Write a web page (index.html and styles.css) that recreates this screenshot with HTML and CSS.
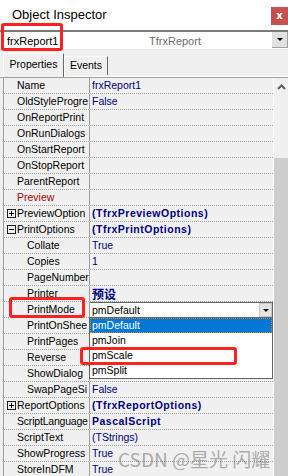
FILE: index.html
```html
<!DOCTYPE html>
<html lang="en">
<head>
  <meta charset="utf-8">
  <title>Object Inspector</title>
  <link rel="stylesheet" href="styles.css">
</head>
<body>
  <div class="inspector">
    <div class="titlebar">
      <span class="title">Object Inspector</span>
      <span class="close">x</span>
    </div>

    <div class="combo">
      <span class="combo-name">frxReport1</span>
      <span class="combo-class">TfrxReport</span>
      <span class="combo-btn"><span class="tri"></span></span>
    </div>

    <div class="tabs">
      <span class="tab active">Properties</span>
      <span class="tab">Events</span>
    </div>

    <div class="content">
      <div class="grid">
        <div class="row"><span class="name">Name</span><span class="value">frxReport1</span></div>
        <div class="row"><span class="name">OldStyleProgre</span><span class="value">False</span></div>
        <div class="row"><span class="name">OnReportPrint</span><span class="value"></span></div>
        <div class="row"><span class="name">OnRunDialogs</span><span class="value"></span></div>
        <div class="row"><span class="name">OnStartReport</span><span class="value"></span></div>
        <div class="row"><span class="name">OnStopReport</span><span class="value"></span></div>
        <div class="row"><span class="name">ParentReport</span><span class="value"></span></div>
        <div class="row"><span class="name red">Preview</span><span class="value"></span></div>
        <div class="row">
          <span class="name group">
            <svg class="toggle" width="9" height="9" viewBox="0 0 9 9"><rect x="0.5" y="0.5" width="8" height="8" fill="none" stroke="#222"/><path d="M2 4.5h5M4.5 2v5" stroke="#000"/></svg>PreviewOption
          </span>
          <span class="value bold">(TfrxPreviewOptions)</span>
        </div>
        <div class="row">
          <span class="name group">
            <svg class="toggle" width="9" height="9" viewBox="0 0 9 9"><rect x="0.5" y="0.5" width="8" height="8" fill="none" stroke="#222"/><path d="M2 4.5h5" stroke="#000"/></svg>PrintOptions
          </span>
          <span class="value bold">(TfrxPrintOptions)</span>
        </div>
        <div class="row"><span class="name sub">Collate</span><span class="value">True</span></div>
        <div class="row"><span class="name sub">Copies</span><span class="value">1</span></div>
        <div class="row"><span class="name sub">PageNumber</span><span class="value"></span></div>
        <div class="row"><span class="name sub">Printer</span><span class="value bold cjk">预设</span></div>
        <div class="row">
          <span class="name sub">PrintMode</span>
          <span class="value editor">pmDefault<span class="edit-btn"><span class="tri"></span></span></span>
        </div>
        <div class="row"><span class="name sub">PrintOnShee</span><span class="value"></span></div>
        <div class="row"><span class="name sub">PrintPages</span><span class="value"></span></div>
        <div class="row"><span class="name sub">Reverse</span><span class="value"></span></div>
        <div class="row"><span class="name sub">ShowDialog</span><span class="value"></span></div>
        <div class="row"><span class="name sub">SwapPageSi</span><span class="value">False</span></div>
        <div class="row">
          <span class="name group">
            <svg class="toggle" width="9" height="9" viewBox="0 0 9 9"><rect x="0.5" y="0.5" width="8" height="8" fill="none" stroke="#222"/><path d="M2 4.5h5M4.5 2v5" stroke="#000"/></svg>ReportOptions
          </span>
          <span class="value bold">(TfrxReportOptions)</span>
        </div>
        <div class="row"><span class="name tight">ScriptLanguage</span><span class="value bold">PascalScript</span></div>
        <div class="row"><span class="name">ScriptText</span><span class="value">(TStrings)</span></div>
        <div class="row"><span class="name">ShowProgress</span><span class="value">True</span></div>
        <div class="row"><span class="name">StoreInDFM</span><span class="value">True</span></div>
      </div>

      <div class="scrollbar">
        <div class="sb-arrow">
          <svg width="9" height="6" viewBox="0 0 9 6"><path d="M1 5L4.5 1.5L8 5" fill="none" stroke="#606060" stroke-width="2"/></svg>
        </div>
        <div class="sb-track"></div>
        <div class="sb-thumb"></div>
      </div>
    </div>

    <ul class="dropdown">
      <li class="selected">pmDefault</li>
      <li>pmJoin</li>
      <li>pmScale</li>
      <li>pmSplit</li>
    </ul>

    <div class="mark mark-name"></div>
    <div class="mark mark-mode"></div>
    <div class="mark mark-scale"></div>

    <div class="watermark">CSDN @星光 闪耀</div>
  </div>
</body>
</html>
```

FILE: styles.css
```css
*, *::before, *::after {
  margin: 0;
  padding: 0;
  box-sizing: border-box;
}

body {
  margin: 0;
  background-color: #f0f0f0;
  color: #000000;
  font-size: 10.5px;
  font-family: "Liberation Sans", Arial, sans-serif;
}

.inspector {
  position: relative;
  display: flex;
  flex-direction: column;
  width: 288px;
  height: 476px;
  overflow: hidden;
  background-color: #f0f0f0;
}

/* title bar */

.titlebar {
  display: flex;
  justify-content: space-between;
  align-items: flex-start;
  height: 30px;
  flex: none;
  background-color: #ffffff;
}

.title {
  padding-left: 12px;
  font-size: 13px;
  line-height: 30px;
}

.close {
  width: 17px;
  height: 18px;
  margin-top: 7px;
  background-color: #c75050;
  color: #ffffff;
  font: bold 10px/17px "DejaVu Sans", sans-serif;
  text-align: center;
}

/* component combo */

.combo {
  display: flex;
  align-items: center;
  height: 20px;
  flex: none;
  background-color: #ffffff;
  border-top: 2px solid #7a7a7a;
  border-bottom: 1px solid #e3e3e3;
  font-size: 11px;
}

.combo-name {
  width: 149px;
  padding-left: 7px;
}

.combo-class {
  flex: 1;
  color: #6d6d6d;
}

.combo-btn {
  display: flex;
  align-items: center;
  justify-content: center;
  width: 16px;
  height: 16px;
  margin-top: -1px;
  background-color: #e1e1e1;
  border-right: 1px solid #a0a0a0;
  border-bottom: 1px solid #a0a0a0;
}

.tri {
  width: 0;
  height: 0;
  border-left: 3px solid transparent;
  border-right: 3px solid transparent;
  border-top: 3px solid #000000;
}

/* tabs */

.tabs {
  display: flex;
  align-items: flex-end;
  height: 27px;
  flex: none;
  padding-left: 3px;
  border-bottom: 1px solid #ffffff;
}

.tab {
  width: 44px;
  height: 19px;
  margin-bottom: 1px;
  border-top: 1px solid #ffffff;
  border-left: 1px solid #ffffff;
  border-right: 1px solid #696969;
  text-align: center;
  line-height: 17px;
}

.tab.active {
  width: 61px;
  height: 24px;
  margin-bottom: -1px;
  padding-top: 3px;
  line-height: 15px;
  background-color: #f0f0f0;
}

/* property grid */

.content {
  display: flex;
  flex: 1;
  min-height: 0;
  border-top: 1px solid #a0a0a0;
}

.grid {
  flex: 1;
  margin-left: 3px;
  border-left: 1px solid #a0a0a0;
}

.row {
  display: flex;
  height: 16px;
  border-bottom: 1px dotted #a0a0a0;
  line-height: 15px;
  white-space: nowrap;
}

.name {
  width: 86px;
  flex: none;
  padding-left: 13px;
  border-right: 1px solid #a0a0a0;
  overflow: hidden;
}

.name.sub {
  padding-left: 23px;
}

.name.tight {
  letter-spacing: -0.2px;
}

.name.group {
  display: flex;
  align-items: center;
  padding-left: 3px;
}

.name.red {
  color: #a80000;
}

.toggle {
  flex: none;
  margin-right: 1px;
}

.value {
  flex: 1;
  min-width: 0;
  padding-left: 2px;
  color: #000080;
  overflow: hidden;
}

.value.bold {
  font-weight: bold;
  letter-spacing: 0.5px;
}

.value.cjk {
  font-family: "Noto Sans CJK SC", sans-serif;
  font-size: 12px;
  letter-spacing: 0;
}

.value.editor {
  display: flex;
  justify-content: space-between;
  align-items: flex-start;
  background-color: #ffffff;
  border-top: 1px solid #646464;
  border-right: 1px solid #646464;
  color: #000000;
  line-height: 14px;
}

.edit-btn {
  display: flex;
  align-items: center;
  justify-content: center;
  width: 13px;
  height: 14px;
  background-color: #e5e5e5;
  border: 1px solid #c8c8c8;
}

/* scrollbar */

.scrollbar {
  display: flex;
  flex-direction: column;
  width: 15px;
  flex: none;
  border-left: 1px solid #ffffff;
}

.sb-arrow {
  display: flex;
  align-items: center;
  justify-content: center;
  height: 17px;
}

.sb-track {
  height: 63px;
}

.sb-thumb {
  flex: 1;
  background-color: #cdcdcd;
}

/* open dropdown list */

.dropdown {
  position: absolute;
  top: 317px;
  left: 89px;
  width: 184px;
  list-style: none;
  background-color: #ffffff;
  border: 1px solid #646464;
}

.dropdown li {
  height: 15px;
  padding-left: 2px;
  line-height: 15px;
}

.dropdown li.selected {
  background-color: #0078d7;
  color: #ffffff;
  outline: 1px dotted #e08020;
  outline-offset: -1px;
}

/* red annotation frames */

.mark {
  position: absolute;
  border: 3px solid #ff2020;
  border-radius: 3px;
}

.mark-name {
  top: 23px;
  left: 1px;
  width: 62px;
  height: 28px;
}

.mark-mode {
  top: 297px;
  left: 9px;
  width: 76px;
  height: 21px;
}

.mark-scale {
  top: 347px;
  left: 80px;
  width: 157px;
  height: 18px;
}

.watermark {
  position: absolute;
  top: 445px;
  left: 118px;
  color: rgba(130, 130, 130, 0.65);
  font-size: 19px;
  font-family: "Noto Sans CJK SC", sans-serif;
  white-space: nowrap;
}
```
